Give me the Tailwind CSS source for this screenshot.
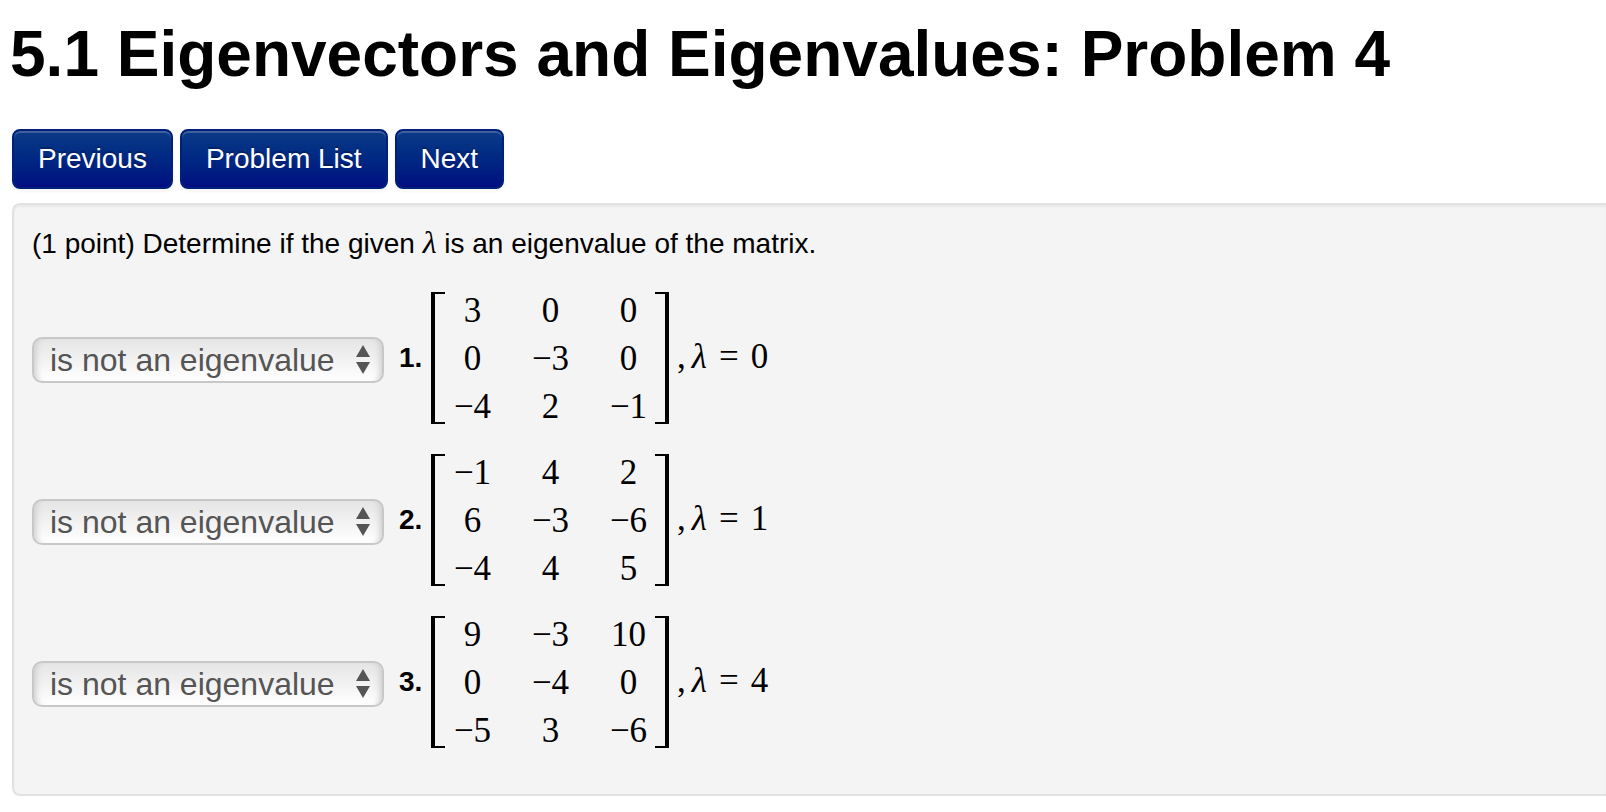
<!DOCTYPE html>
<html lang="en">
<head>
    <meta charset="UTF-8">
    <meta name="viewport" content="width=device-width, initial-scale=1.0">
    <title>5.1 Eigenvectors and Eigenvalues: Problem 4</title>
    <script src="https://cdn.jsdelivr.net/npm/@tailwindcss/browser@4"></script>
</head>
<body class="bg-white text-black text-[28px] font-['Liberation_Sans',Arial,sans-serif]">
    <header class="pt-[14px] pl-[10px]">
        <h1 class="text-[64px] leading-[80px] font-bold">5.1 Eigenvectors and Eigenvalues: Problem 4</h1>
    </header>

    <main class="pl-3">
        <nav class="flex gap-[7px] mt-[35px]">
            <button class="h-[60px] px-6 rounded-lg border-2 border-[#00217a] bg-linear-to-b from-[#0d3a86] to-[#000c80] text-white text-shadow-[0_-2px_0_rgba(0,0,0,0.25)] shadow-[inset_0_2px_0_rgba(255,255,255,0.2),0_2px_4px_rgba(0,0,0,0.05)]">Previous</button>
            <button class="h-[60px] px-6 rounded-lg border-2 border-[#00217a] bg-linear-to-b from-[#0d3a86] to-[#000c80] text-white text-shadow-[0_-2px_0_rgba(0,0,0,0.25)] shadow-[inset_0_2px_0_rgba(255,255,255,0.2),0_2px_4px_rgba(0,0,0,0.05)]">Problem List</button>
            <button class="h-[60px] px-6 rounded-lg border-2 border-[#00217a] bg-linear-to-b from-[#0d3a86] to-[#000c80] text-white text-shadow-[0_-2px_0_rgba(0,0,0,0.25)] shadow-[inset_0_2px_0_rgba(255,255,255,0.2),0_2px_4px_rgba(0,0,0,0.05)]">Next</button>
        </nav>

        <section class="mt-[14px] pt-[19px] pb-[46px] pl-[18px] rounded-l-lg border-2 border-r-0 border-[#e2e2e2] bg-[#f4f4f4] shadow-[inset_0_2px_2px_rgba(0,0,0,0.05)]">
            <p class="leading-10">(1 point) Determine if the given <i class="font-['Liberation_Serif',serif] text-[32px] leading-none">λ</i> is an eigenvalue of the matrix.</p>

            <div id="problems" class="flex flex-col gap-[30px] mt-7"></div>
        </section>
    </main>

    <script>
        const problems = [
            { rows: [[3, 0, 0], [0, -3, 0], [-4, 2, -1]], lambda: 0 },
            { rows: [[-1, 4, 2], [6, -3, -6], [-4, 4, 5]], lambda: 1 },
            { rows: [[9, -3, 10], [0, -4, 0], [-5, 3, -6]], lambda: 4 }
        ];

        // Real minus sign instead of a hyphen
        const num = n => String(n).replace('-', '−');

        document.getElementById('problems').innerHTML = problems.map((p, i) => `
            <div class="flex items-center">
                <div class="relative mt-1">
                    <select id="answer-${i + 1}" class="block appearance-none w-[352px] h-[46px] pl-4 pr-12 rounded-[10px] border-2 border-[#c8c8c8] bg-linear-to-b from-[#e5e5e5] to-white text-[32px] leading-[38px] text-[#555] shadow-[inset_8px_0_6px_-6px_#ccc,inset_-8px_0_6px_-6px_#ccc]">
                        <option>is not an eigenvalue</option>
                        <option>is an eigenvalue</option>
                    </select>
                    <svg class="absolute right-[14px] top-2 pointer-events-none" width="14" height="29" viewBox="0 0 14 29" fill="#555">
                        <path d="M7 0L14 12H0Z"/>
                        <path d="M7 29L14 17H0Z"/>
                    </svg>
                </div>
                <label for="answer-${i + 1}" class="ml-[15px] w-8 font-bold">${i + 1}.</label>
                <div class="flex font-['Liberation_Serif',serif] text-[35px]">
                    <div class="w-[14px] border-l-4 border-y-2 border-black"></div>
                    <div class="grid grid-cols-[repeat(3,53px)] gap-x-[25px] gap-y-[14px] pt-0.5 pl-px leading-[34px] text-center">
                        ${p.rows.flat().map(n => `<span>${num(n)}</span>`).join('')}
                    </div>
                    <div class="w-[14px] border-r-4 border-y-2 border-black"></div>
                </div>
                <div class="flex ml-2 pb-0.5 font-['Liberation_Serif',serif] text-[35px]">
                    <span>,</span>
                    <i class="ml-1.5">λ</i>
                    <span class="ml-3">=</span>
                    <span class="ml-3">${p.lambda}</span>
                </div>
            </div>
        `).join('');
    </script>
</body>
</html>
